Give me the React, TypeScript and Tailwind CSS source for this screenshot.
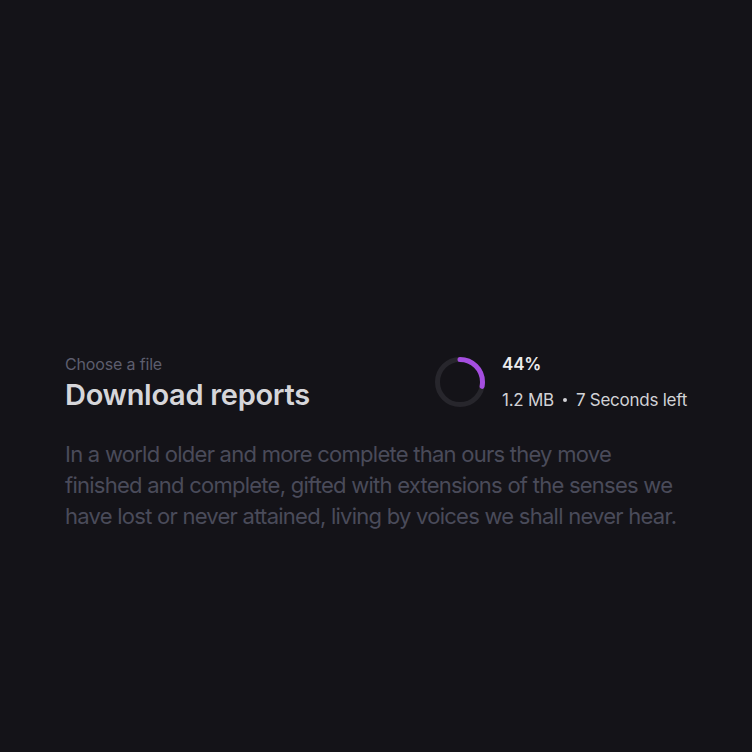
export default function App() {
  const pct = 0.28;
  const r = 22.5;
  const c = 2 * Math.PI * r;
  return (
    <div className="min-h-[752px] w-full bg-[#141318] px-[65px] pt-[352px] font-['Inter',sans-serif]">
      <div className="flex items-start justify-between">
        <div className="flex flex-col">
          <span className="text-[16px] leading-[24px] tracking-[-0.01em] text-[#5d5e6e]">Choose a file</span>
          <span className="text-[29px] leading-[37px] font-semibold tracking-[-0.01em] text-[#d6d6da]">Download reports</span>
        </div>
        <div className="flex items-center gap-[17px]">
          <svg width="50" height="50" viewBox="1 1 50 50" className="shrink-0">
            <circle cx="26" cy="26" r={r} fill="none" stroke="#27262c" strokeWidth="5" />
            <circle
              cx="26"
              cy="26"
              r={r}
              fill="none"
              stroke="#a54ee0"
              strokeWidth="5"
              strokeLinecap="round"
              strokeDasharray={`${c * pct} ${c}`}
              transform="rotate(-90 26 26)"
            />
          </svg>
          <div className="flex flex-col gap-[14px] pt-[1px]">
            <span className="text-[17px] leading-[22px] font-semibold tracking-[-0.01em] text-[#ececee]">44%</span>
            <div className="flex items-center gap-[9px] text-[17px] leading-[22px] tracking-[-0.015em] text-[#d2d2d6]">
              <span>1.2 MB</span>
              <span className="h-[4px] w-[4px] rounded-full bg-[#d2d2d6]" />
              <span>7 Seconds left</span>
            </div>
          </div>
        </div>
      </div>
      <p className="mt-[26px] text-[22px] leading-[31px] tracking-[-0.034em] text-[#4a4b5a]">
        In a world older and more complete than ours they move finished and complete, gifted with extensions of the senses we have lost or never attained, living by voices we shall never hear.
      </p>
    </div>
  );
}
